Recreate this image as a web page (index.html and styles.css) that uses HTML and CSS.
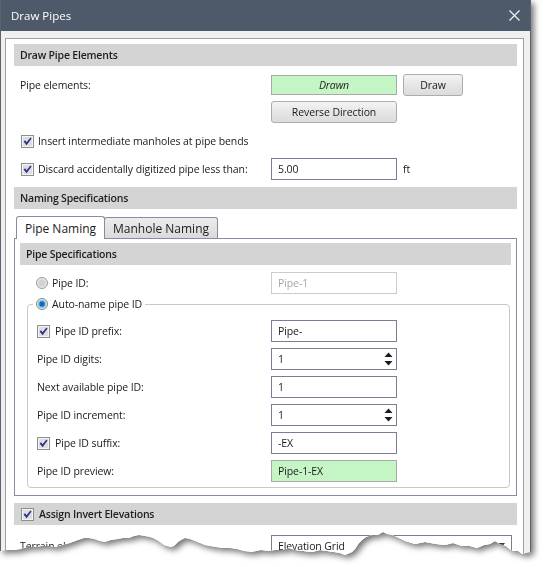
FILE: index.html
```html
<!DOCTYPE html>
<html>
<head>
<meta charset="utf-8">
<link rel="stylesheet" href="styles.css">
</head>
<body>
<div class="shadow">
  <div class="window">
    <div class="titlebar">
      <span class="title">Draw Pipes</span>
      <svg class="close" viewBox="0 0 11 11"><path d="M0.5 0.5 L10.5 10.5 M10.5 0.5 L0.5 10.5" stroke="#f2f2f2" stroke-width="1.2" fill="none"/></svg>
    </div>
    <div class="client">
      <div class="panel">
        <div class="section">Draw Pipe Elements</div>

        <div class="row r-first">
          <span class="label">Pipe elements:</span>
          <div class="field green drawn">Drawn</div>
          <button class="btn btn-draw">Draw</button>
        </div>
        <div class="row r-rev">
          <span class="label"></span>
          <button class="btn btn-wide">Reverse Direction</button>
        </div>
        <div class="row r-cb1">
          <span class="label cblabel wide">
            <svg class="cb" viewBox="0 0 13 13"><rect x="0.5" y="0.5" width="12" height="12" fill="#f4f4f4" stroke="#8e8f8f"/><rect x="2" y="2" width="9" height="9" fill="#dedede"/><path d="M2.6 6.6 L4.1 5.3 L5.6 7.2 L9.4 2.4 L10.6 3.5 L5.6 10.2 Z" fill="#2d318c"/></svg>
            <span>Insert intermediate manholes at pipe bends</span>
          </span>
        </div>
        <div class="row r-cb2">
          <span class="label cblabel">
            <svg class="cb" viewBox="0 0 13 13"><rect x="0.5" y="0.5" width="12" height="12" fill="#f4f4f4" stroke="#8e8f8f"/><rect x="2" y="2" width="9" height="9" fill="#dedede"/><path d="M2.6 6.6 L4.1 5.3 L5.6 7.2 L9.4 2.4 L10.6 3.5 L5.6 10.2 Z" fill="#2d318c"/></svg>
            <span>Discard accidentally digitized pipe less than:</span>
          </span>
          <div class="field">5.00</div>
          <span class="unit">ft</span>
        </div>

        <div class="section s-naming">Naming Specifications</div>

        <div class="tabs">
          <div class="tab active">Pipe Naming</div>
          <div class="tab">Manhole Naming</div>
        </div>
        <div class="tabpage">
          <div class="section">Pipe Specifications</div>
          <div class="row r-pipeid">
            <span class="label tlabel">
              <svg class="rb" viewBox="0 0 12 12"><circle cx="6" cy="6" r="5.5" fill="#e6e6e6" stroke="#9a9a9a"/><circle cx="6" cy="6" r="3.6" fill="#d2d2d2"/></svg>
              <span>Pipe ID:</span>
            </span>
            <div class="field disabled">Pipe-1</div>
          </div>

          <fieldset class="group">
            <legend>
              <svg class="rb" viewBox="0 0 12 12"><circle cx="6" cy="6" r="5.5" fill="#dfe9f2" stroke="#7d8a96"/><circle cx="6" cy="6" r="4" fill="#7fc6ea"/><circle cx="6" cy="6" r="2.7" fill="#1e67b0"/></svg>
              <span>Auto-name pipe ID</span>
            </legend>

            <div class="row g-first">
              <span class="label glabel">
                <svg class="cb" viewBox="0 0 13 13"><rect x="0.5" y="0.5" width="12" height="12" fill="#f4f4f4" stroke="#8e8f8f"/><rect x="2" y="2" width="9" height="9" fill="#dedede"/><path d="M2.6 6.6 L4.1 5.3 L5.6 7.2 L9.4 2.4 L10.6 3.5 L5.6 10.2 Z" fill="#2d318c"/></svg>
                <span>Pipe ID prefix:</span>
              </span>
              <div class="field">Pipe-</div>
            </div>
            <div class="row g-row">
              <span class="label glabel">Pipe ID digits:</span>
              <div class="field spin"><span>1</span><svg class="spinner" viewBox="0 0 9 14"><path d="M0.5 5 L4.5 0.5 L8.5 5 Z M0.5 9 L8.5 9 L4.5 13.5 Z" fill="#1b1b1b"/></svg></div>
            </div>
            <div class="row g-row">
              <span class="label glabel">Next available pipe ID:</span>
              <div class="field">1</div>
            </div>
            <div class="row g-row">
              <span class="label glabel">Pipe ID increment:</span>
              <div class="field spin"><span>1</span><svg class="spinner" viewBox="0 0 9 14"><path d="M0.5 5 L4.5 0.5 L8.5 5 Z M0.5 9 L8.5 9 L4.5 13.5 Z" fill="#1b1b1b"/></svg></div>
            </div>
            <div class="row g-row">
              <span class="label glabel">
                <svg class="cb" viewBox="0 0 13 13"><rect x="0.5" y="0.5" width="12" height="12" fill="#f4f4f4" stroke="#8e8f8f"/><rect x="2" y="2" width="9" height="9" fill="#dedede"/><path d="M2.6 6.6 L4.1 5.3 L5.6 7.2 L9.4 2.4 L10.6 3.5 L5.6 10.2 Z" fill="#2d318c"/></svg>
                <span>Pipe ID suffix:</span>
              </span>
              <div class="field">-EX</div>
            </div>
            <div class="row g-row">
              <span class="label glabel">Pipe ID preview:</span>
              <div class="field green">Pipe-1-EX</div>
            </div>
          </fieldset>
        </div>

        <div class="section s-assign">
          <svg class="cb" viewBox="0 0 13 13"><rect x="0.5" y="0.5" width="12" height="12" fill="#f4f4f4" stroke="#8e8f8f"/><rect x="2" y="2" width="9" height="9" fill="#dedede"/><path d="M2.6 6.6 L4.1 5.3 L5.6 7.2 L9.4 2.4 L10.6 3.5 L5.6 10.2 Z" fill="#2d318c"/></svg>
          <span>Assign Invert Elevations</span>
        </div>

        <div class="row r-terrain">
          <span class="label">Terrain elevation source:</span>
          <div class="field combo"><span>Elevation Grid</span><svg class="arrow" viewBox="0 0 9 6"><path d="M0 0 L9 0 L4.5 6 Z" fill="#3a3a3a"/></svg></div>
        </div>
      </div>
    </div>
  </div>
</div>
</body>
</html>
```

FILE: styles.css
```css
* { box-sizing: border-box; }

body {
  margin: 0;
  background: #ffffff;
  font-family: "Open Sans", "Noto Sans", sans-serif;
  font-size: 10.5px;
  letter-spacing: -0.1px;
  color: #1b1b1b;
}

.shadow {
  width: 531px;
  filter: drop-shadow(3px 3px 3px rgba(0, 0, 0, 0.55));
}

.window {
  width: 531px;
  height: 567px;
  background: #f0f0f0;
  border-left: 1px solid #5a626d;
  border-right: 1px solid #5a626d;
  overflow: hidden;
  clip-path: polygon(
    0 0, 531px 0,
    531px 552px, 522px 554px, 518px 551px, 512px 551px, 506px 546px, 500px 544px,
    495px 541px, 490px 544px, 484px 545px, 477px 548px, 470px 546px, 462px 546px,
    453px 543px, 445px 545px, 436px 544px, 425px 542px, 415px 544px, 405px 541px,
    397px 537px, 392px 535px, 387px 534px, 383px 532px, 378px 535px, 372px 535px,
    366px 537px, 362px 540px, 359px 543px, 355px 549px, 352px 552px, 345px 555px,
    340px 553px, 334px 552px, 327px 551px, 320px 550px, 312px 552px, 303px 551px,
    295px 550px, 289px 548px, 282px 550px, 275px 550px, 268px 551px, 261px 550px,
    252px 552px, 244px 551px, 237px 549px, 230px 548px, 222px 548px, 216px 547px,
    210px 546px, 205px 545px, 200px 543px, 195px 541px, 190px 539px, 185px 538px,
    181px 540px, 178px 542px, 174px 546px, 171px 547px, 167px 546px, 164px 545px,
    160px 542px, 157px 540px, 153px 538px, 150px 537px, 145px 536px, 139px 535px,
    134px 536px, 129px 538px, 123px 538px, 118px 539px, 111px 540px, 105px 542px,
    100px 541px, 94px 539px, 89px 538px, 84px 538px, 78px 540px, 70px 543px,
    63px 545px, 56px 547px, 49px 546px, 42px 546px, 35px 547px, 28px 547px,
    21px 549px, 14px 550px, 7px 550px, 0 551px
  );
}

.titlebar {
  height: 31px;
  background: #4e5a69;
  color: #ffffff;
  font-size: 11.5px;
  letter-spacing: 0;
  display: flex;
  align-items: center;
  justify-content: space-between;
  padding: 0 10px 0 10px;
}

.close {
  width: 11px;
  height: 11px;
  display: block;
}

.client {
  padding: 7px 6px 0 4px;
}

.panel {
  background: #ffffff;
  border: 1px solid #a0a0a0;
  padding: 5px 6px 0 8px;
  height: 540px;
}

.section {
  height: 22px;
  background: #d4d4d4;
  padding-left: 6px;
  font-weight: 600;
  letter-spacing: -0.2px;
  display: flex;
  align-items: center;
  color: #1e1e1e;
}

.row {
  display: flex;
  align-items: center;
  height: 22px;
}

.label {
  width: 257px;
  flex: none;
  padding-left: 6px;
  display: flex;
  align-items: center;
  white-space: nowrap;
}

.cblabel { padding-left: 7px; gap: 4px; }
.cblabel.wide { width: auto; }

.cb { width: 13px; height: 13px; flex: none; display: block; }
.rb { width: 12px; height: 12px; flex: none; display: block; }

.r-first { margin-top: 8px; }
.r-rev { margin-top: 5px; }
.r-cb1 { margin-top: 7px; }
.r-cb2 { margin-top: 6px; }
.s-naming { margin-top: 7px; }

.field {
  width: 126px;
  height: 22px;
  flex: none;
  border: 1px solid #7c7c96;
  background: #ffffff;
  padding-left: 6px;
  display: flex;
  align-items: center;
  white-space: nowrap;
}

.field.green {
  background: #c5f5c5;
  border-color: #a9a9a9;
}

.field.drawn {
  font-style: italic;
  justify-content: center;
  padding-left: 0;
  height: 20px;
}

.field.disabled {
  border-color: #cccccc;
  color: #a6a6a6;
}

.field.spin {
  justify-content: space-between;
  padding-right: 3px;
}

.spinner { width: 9px; height: 14px; display: block; }

.btn {
  height: 22px;
  border: 1px solid #acacac;
  border-radius: 3px;
  background: linear-gradient(#f4f4f4, #e6e6e6 50%, #dcdcdc);
  font: inherit;
  letter-spacing: inherit;
  color: #1b1b1b;
  padding: 0;
  flex: none;
}

.btn-draw { width: 60px; margin-left: 6px; }
.btn-wide { width: 126px; }

.unit { margin-left: 6px; }

.tabs {
  margin-top: 7px;
  height: 22px;
  display: flex;
  align-items: flex-end;
  padding-left: 2px;
  font-size: 12px;
  letter-spacing: 0;
}

.tab {
  height: 21px;
  padding: 0 10px;
  display: flex;
  align-items: center;
  border: 1px solid #8a8aa2;
  border-bottom: none;
  border-radius: 3px 3px 0 0;
  background: linear-gradient(#ececec, #dadada);
  margin-left: -1px;
}

.tab.active {
  height: 23px;
  margin-left: 0;
  margin-bottom: -1px;
  background: #ffffff;
  position: relative;
  z-index: 1;
  width: 89px;
  justify-content: center;
  padding: 0;
}

.tab:not(.active) { width: 114px; justify-content: center; padding: 0; }

.tabpage {
  border: 1px solid #8a8aa2;
  padding: 4px 5px 0 5px;
}

.r-pipeid { margin-top: 7px; }
.tlabel { width: 251px; padding-left: 16px; gap: 4px; }

.group {
  margin: 1px 1px 7px 7px;
  border: 1px solid #c9c9c9;
  border-radius: 4px;
  padding: 0 0 5px 9px;
  min-width: 0;
}

.group legend {
  margin-left: -4px;
  padding: 0 3px;
  height: 18px;
  display: flex;
  align-items: center;
  gap: 4px;
}

.glabel { width: 234px; padding-left: 0; gap: 5px; }

.g-first { margin-top: 7px; }
.g-row { margin-top: 6px; }

.s-assign {
  margin-top: 7px;
  padding-left: 7px;
  gap: 5px;
}

.r-terrain { margin-top: 10px; }

.field.combo {
  width: 241px;
  justify-content: space-between;
  padding-right: 6px;
}

.arrow { width: 9px; height: 6px; display: block; }
```
